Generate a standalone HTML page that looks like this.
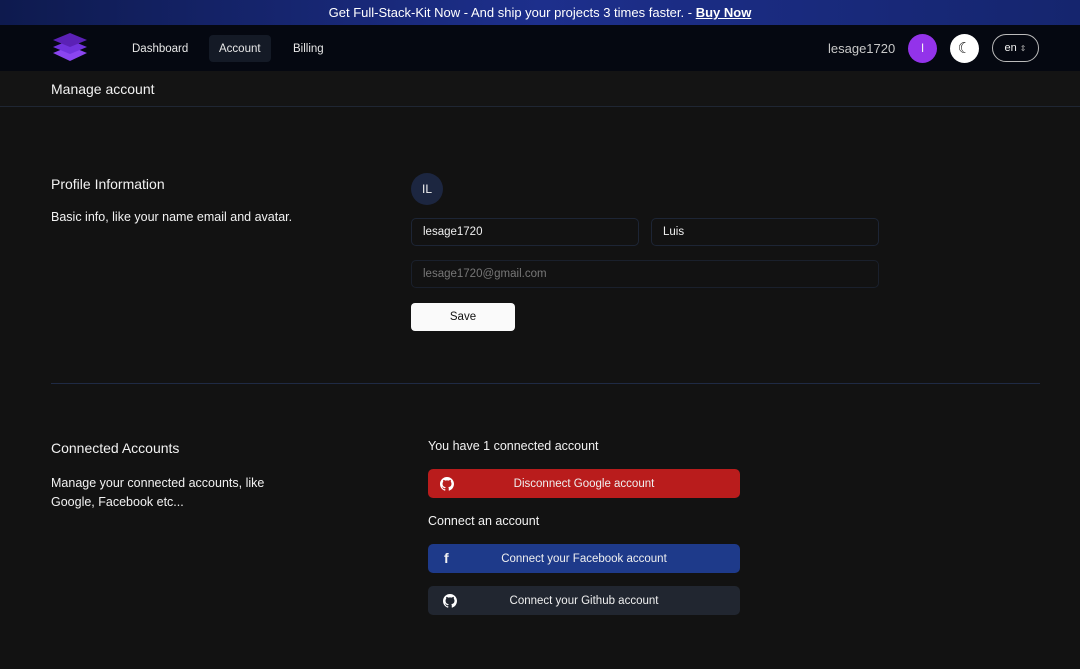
<!DOCTYPE html><html><head><style>
*{box-sizing:border-box;margin:0;padding:0}
body{width:1080px;height:669px;background:#121212;font-family:"Liberation Sans",sans-serif;color:#f2f2f2;position:relative;overflow:hidden}
.ban{position:absolute;top:0;left:0;width:1080px;height:25px;background:linear-gradient(90deg,#0e1a4e,#1d2f8c 50%,#15256e);text-align:center;font-size:13px;line-height:25px;color:#fff}
.ban b{text-decoration:underline}
.nav{position:absolute;top:25px;left:0;width:1080px;height:46px;background:#050811}
.a{position:absolute}
.nl{font-size:11.5px;color:#e8e8e8;top:17px}
.hdr{position:absolute;top:71px;left:0;width:1080px;height:36px;border-bottom:1px solid #1f2633;background:#141414}
.inp{position:absolute;height:28px;border:1px solid #1d2535;border-radius:5px;font-size:11.5px;line-height:27px;padding-left:11px;color:#f0f0f0}
.btn{position:absolute;left:428px;width:312px;height:29px;border-radius:5px;font-size:11.5px;line-height:30px;text-align:center;color:#f0f0f0}
</style></head><body>
<div class="ban">Get Full-Stack-Kit Now - And ship your projects 3 times faster. - <b>Buy Now</b></div>
<div class="nav">
<svg class="a" style="left:52px;top:6px" width="36" height="32" viewBox="0 0 36 32"><path d="M18 15 L35 22 L18 30 L1 22Z" fill="#8b45f0"/><path d="M18 9 L35 16 L18 23 L1 16Z" fill="#7233dd"/><path d="M18 2 L35 9 L18 16 L1 9Z" fill="#5b21b6"/></svg>
<div class="a nl" style="left:132px;top:18px">Dashboard</div>
<div class="a" style="left:209px;top:10px;width:62px;height:27px;background:#141a26;border-radius:4px"></div>
<div class="a nl" style="left:219px;top:18px">Account</div>
<div class="a nl" style="left:293px;top:18px">Billing</div>
<div class="a" style="left:828px;top:16px;font-size:13px;color:#c8c8c8">lesage1720</div>
<div class="a" style="left:908px;top:9px;width:29px;height:29px;border-radius:50%;background:#9333ea;text-align:center;line-height:29px;font-size:12px">I</div>
<div class="a" style="left:950px;top:9px;width:29px;height:29px;border-radius:50%;background:#fff;color:#111;text-align:center;line-height:29px;font-size:15px">☾</div>
<div class="a" style="left:992px;top:9px;width:47px;height:28px;border:1px solid #bbb;border-radius:14px;text-align:center;line-height:27px;font-size:11px">en <span style="font-size:8px;color:#aaa">⇕</span></div>
</div>
<div class="hdr"><div class="a" style="left:51px;top:10px;font-size:14px">Manage account</div></div>
<div class="a" style="left:51px;top:176px;font-size:14px">Profile Information</div>
<div class="a" style="left:51px;top:210px;font-size:12.5px">Basic info, like your name email and avatar.</div>
<div class="a" style="left:411px;top:173px;width:32px;height:32px;border-radius:50%;background:#1c2640;text-align:center;line-height:32px;font-size:12px">IL</div>
<div class="inp" style="left:411px;top:218px;width:228px">lesage1720</div>
<div class="inp" style="left:651px;top:218px;width:228px">Luis</div>
<div class="inp" style="left:411px;top:260px;width:468px;color:#777;border-color:#1a202c">lesage1720@gmail.com</div>
<div class="a" style="left:411px;top:303px;width:104px;height:28px;background:#fafafa;border-radius:4px;color:#111;font-size:11.5px;text-align:center;line-height:29px">Save</div>
<div class="a" style="left:51px;top:383px;width:989px;height:1px;background:#1f2a44"></div>
<div class="a" style="left:51px;top:440px;font-size:14px">Connected Accounts</div>
<div class="a" style="left:51px;top:474px;font-size:12.5px;line-height:19px">Manage your connected accounts, like<br>Google, Facebook etc...</div>
<div class="a" style="left:428px;top:439px;font-size:12.5px">You have 1 connected account</div>
<div class="btn" style="top:469px;background:#b91c1c">Disconnect Google account</div>
<svg class="a" style="left:440px;top:477px" width="14" height="14" viewBox="0 0 16 16"><path fill="#fff" d="M8 0C3.58 0 0 3.58 0 8c0 3.54 2.29 6.530 5.47 7.59.4.07.55-.17.55-.38v-1.33c-2.23.48-2.7-1.07-2.7-1.07-.36-.93-.89-1.17-.89-1.17-.73-.5.06-.49.06-.49.8.06 1.23.83 1.23.83.72 1.22 1.87.87 2.33.66.07-.52.28-.87.51-1.07-1.78-.2-3.64-.89-3.64-3.95 0-.87.31-1.59.82-2.15-.08-.2-.36-1.02.08-2.12 0 0 .67-.21 2.2.82a7.6 7.6 0 0 1 4 0c1.53-1.04 2.2-.82 2.2-.82.44 1.1.16 1.92.08 2.12.51.56.82 1.27.82 2.15 0 3.07-1.87 3.75-3.65 3.95.29.25.54.73.54 1.48v2.2c0 .21.15.46.55.38A8 8 0 0 0 16 8c0-4.42-3.58-8-8-8z"/></svg>
<div class="a" style="left:428px;top:514px;font-size:12.5px">Connect an account</div>
<div class="btn" style="top:544px;background:#1e3a8a">Connect your Facebook account</div>
<div class="a" style="left:444px;top:550px;font-size:14px;font-weight:bold">f</div>
<div class="btn" style="top:586px;background:#212630">Connect your Github account</div>
<svg class="a" style="left:443px;top:594px" width="14" height="14" viewBox="0 0 16 16"><path fill="#fff" d="M8 0C3.58 0 0 3.58 0 8c0 3.54 2.29 6.53 5.47 7.59.4.07.55-.17.55-.38v-1.33c-2.23.48-2.7-1.07-2.7-1.07-.36-.93-.89-1.17-.89-1.17-.73-.5.06-.49.06-.49.8.06 1.23.83 1.23.83.72 1.22 1.87.87 2.33.66.07-.52.28-.87.51-1.07-1.78-.2-3.64-.89-3.64-3.95 0-.87.31-1.59.82-2.15-.08-.2-.36-1.02.08-2.12 0 0 .67-.21 2.2.82a7.6 7.6 0 0 1 4 0c1.53-1.04 2.2-.82 2.2-.82.44 1.1.16 1.92.08 2.12.51.56.82 1.27.82 2.15 0 3.07-1.87 3.75-3.65 3.95.29.25.54.73.54 1.48v2.2c0 .21.15.46.55.38A8 8 0 0 0 16 8c0-4.42-3.58-8-8-8z"/></svg>
</body></html>
